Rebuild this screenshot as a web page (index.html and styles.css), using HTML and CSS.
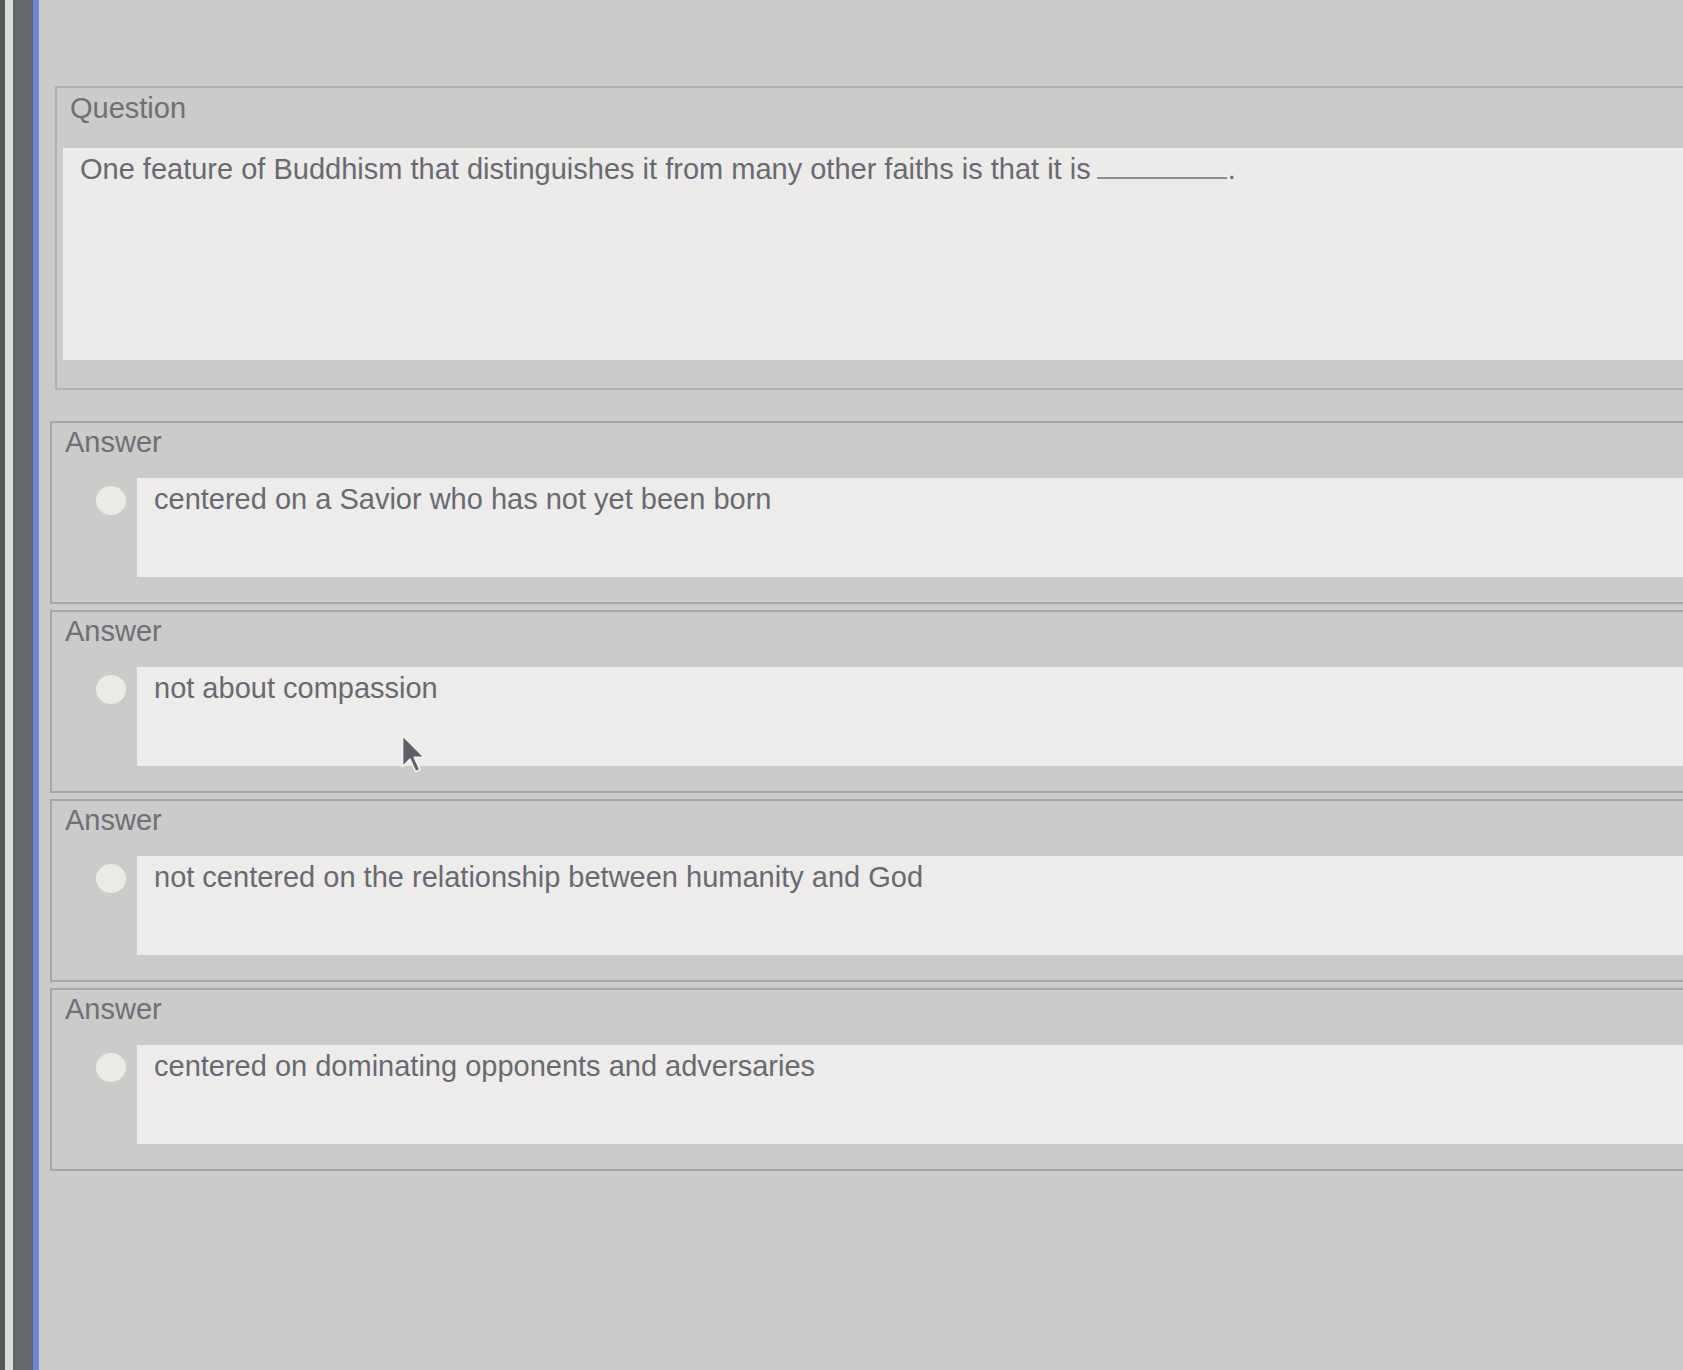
FILE: index.html
```html
<!DOCTYPE html>
<html lang="en">
<head>
<meta charset="utf-8">
<title>Question</title>
<link rel="stylesheet" href="styles.css">
</head>
<body>
<div class="screen">
  <div class="bezel">
    <span class="stripe stripe-dark"></span>
    <span class="stripe stripe-light"></span>
    <span class="stripe stripe-slate"></span>
    <span class="stripe stripe-blue"></span>
  </div>
  <main class="page">
    <section class="question-box">
      <div class="label">Question</div>
      <div class="question-body">One feature of Buddhism that distinguishes it from many other faiths is that it is <span class="blank"></span>.</div>
    </section>

    <section class="answer-box">
      <div class="label">Answer</div>
      <div class="answer-row">
        <span class="radio"></span>
        <div class="answer-body">centered on a Savior who has not yet been born</div>
      </div>
    </section>

    <section class="answer-box">
      <div class="label">Answer</div>
      <div class="answer-row">
        <span class="radio"></span>
        <div class="answer-body">not about compassion</div>
      </div>
    </section>

    <section class="answer-box">
      <div class="label">Answer</div>
      <div class="answer-row">
        <span class="radio"></span>
        <div class="answer-body">not centered on the relationship between humanity and God</div>
      </div>
    </section>

    <section class="answer-box">
      <div class="label">Answer</div>
      <div class="answer-row">
        <span class="radio"></span>
        <div class="answer-body">centered on dominating opponents and adversaries</div>
      </div>
    </section>
  </main>
  <svg class="cursor" width="30" height="45" viewBox="0 0 24 36" aria-hidden="true">
    <path d="M2 2 L2 27 L8 21 L12.5 31 L16 29.5 L11.5 19.5 L19.5 19.5 Z" fill="#5e5e66" stroke="#f2f2ef" stroke-width="1.4" stroke-linejoin="round"/>
  </svg>
</div>
</body>
</html>
```

FILE: styles.css
```css
html, body {
  margin: 0;
  padding: 0;
  height: 100%;
}

body {
  background: #cbcbc9;
  overflow: hidden;
  font-family: "Liberation Sans", Arial, Helvetica, sans-serif;
  font-size: 29px;
  color: #696973;
}

.screen {
  position: relative;
  display: flex;
  min-height: 1370px;
  width: 1683px;
}

.bezel {
  display: flex;
  flex: 0 0 auto;
}

.stripe {
  display: block;
  height: 100%;
}

.stripe-dark {
  width: 5px;
  background: #55585b;
}

.stripe-light {
  width: 8px;
  background: #dcdcda;
}

.stripe-slate {
  width: 20px;
  background: #62676c;
}

.stripe-blue {
  width: 6px;
  background: #6f87d6;
}

.page {
  flex: 1 1 auto;
  padding-top: 86px;
  min-width: 0;
}

.label {
  line-height: 33px;
  color: #6f6f77;
}

.question-box {
  margin-left: 16px;
  width: calc(100% + 40px);
  border: 2px solid #b1b1b0;
  padding: 4px 0 28px 0;
}

.question-box .label {
  padding-left: 13px;
}

.question-body {
  margin: 23px 0 0 6px;
  height: 212px;
  box-sizing: border-box;
  padding: 5px 0 0 17px;
  background: #ecebe9;
  line-height: 33px;
}

.blank {
  display: inline-block;
  width: 130px;
  height: 20px;
  border-bottom: 2px solid #8c8c94;
  margin-left: -2px;
  margin-right: 1px;
}

.answer-box {
  margin-left: 11px;
  width: calc(100% + 40px);
  border: 2px solid #a6a6a5;
  padding: 3px 0 25px 0;
}

.question-box + .answer-box {
  margin-top: 31px;
}

.answer-box + .answer-box {
  margin-top: 6px;
}

.answer-box .label {
  padding-left: 13px;
}

.answer-row {
  display: flex;
  align-items: flex-start;
  margin-top: 19px;
}

.radio {
  flex: 0 0 auto;
  width: 30px;
  height: 29px;
  margin: 8px 11px 0 44px;
  border-radius: 50%;
  background: #ebeae7;
}

.answer-body {
  flex: 1 1 auto;
  height: 99px;
  box-sizing: border-box;
  padding: 5px 0 0 17px;
  background: #edecea;
  line-height: 33px;
}

.cursor {
  position: absolute;
  left: 400px;
  top: 733px;
}
```
